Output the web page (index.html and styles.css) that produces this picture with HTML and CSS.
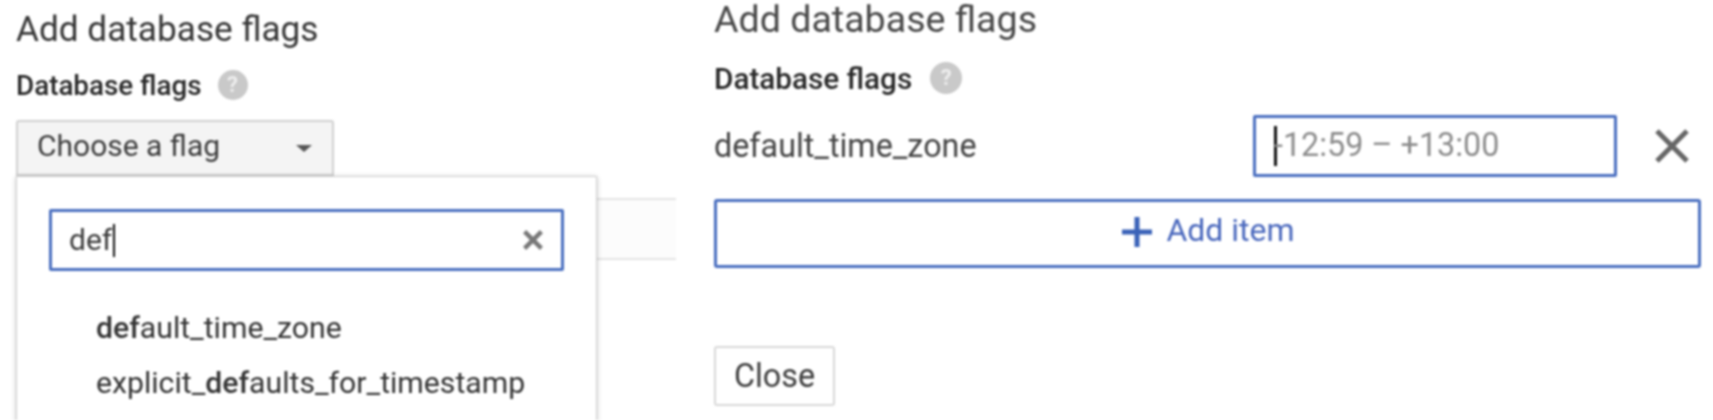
FILE: index.html
```html
<!DOCTYPE html>
<html lang="en">
<head>
<meta charset="utf-8">
<title>Add database flags</title>
<link rel="stylesheet" href="styles.css">
</head>
<body>
<div class="page">
  <section class="panel panel-left">
    <h2 class="title">Add database flags</h2>
    <div class="label-row">
      <span class="label">Database flags</span>
      <span class="help">?</span>
    </div>
    <div class="select-wrap">
      <button class="select">Choose a flag<span class="arrow"></span></button>
      <div class="backdrop-row"></div>
      <div class="menu">
        <div class="search">
          <span class="search-text">def</span><span class="caret"></span>
          <svg class="search-clear" viewBox="0 0 20 20" width="24" height="24"><path d="M3 3 17 17M17 3 3 17" fill="none" stroke="#777" stroke-width="3.6"/></svg>
        </div>
        <ul class="options">
          <li><b>def</b>ault_time_zone</li>
          <li>explicit_<b>def</b>aults_for_timestamp</li>
        </ul>
      </div>
    </div>
  </section>
  <section class="panel panel-right">
    <h2 class="title">Add database flags</h2>
    <div class="label-row">
      <span class="label">Database flags</span>
      <span class="help">?</span>
    </div>
    <div class="flag-row">
      <span class="flag-name">default_time_zone</span>
      <div class="value-input"><span class="caret caret-tall"></span><span class="placeholder">-12:59 – +13:00</span></div>
      <svg class="remove" viewBox="0 0 34 34" width="34" height="34"><path d="M2 2 32 32M32 2 2 32" fill="none" stroke="#666" stroke-width="5"/></svg>
    </div>
    <button class="add-item">
      <svg viewBox="0 0 34 34" width="34" height="34"><path d="M17 2V32M2 17H32" fill="none" stroke="#3a62b8" stroke-width="5"/></svg>
      <span class="add-label">Add item</span>
    </button>
    <button class="close">Close</button>
  </section>
</div>
</body>
</html>
```
FILE: styles.css
```css
* { box-sizing: border-box; }
html, body { margin: 0; height: 420px; overflow: hidden; background: #fff; }
body { font-family: Roboto, "Liberation Sans", sans-serif; color: #3a3a3a; }
.page { display: flex; width: 1713px; height: 420px; overflow: hidden; filter: blur(0.8px); }
.panel { flex: none; }
.panel-left { width: 714px; padding: 10px 0 0 16px; }
.panel-right { width: 987px; padding-top: 0; }
.title { margin: 0; font-size: 35.2px; line-height: 38px; font-weight: 400; color: #363636; }
.panel-right .title { font-size: 37.6px; color: #484848; }
.label-row { display: flex; align-items: center; height: 32px; margin-top: 21px; }
.panel-right .label-row { margin-top: 24px; }
.label { font-size: 27.8px; font-weight: 500; color: #282828; }
.panel-right .label { font-size: 29.7px; }
.help { width: 30px; height: 30px; margin-left: 16px; border-radius: 50%; background: #c9c9c9; color: #eee; font-size: 22px; font-weight: 700; text-align: center; line-height: 30px; }
.panel-right .help { width: 32px; height: 32px; margin-left: 18px; line-height: 32px; }
.select-wrap { position: relative; margin-top: 19px; }
.select { display: flex; align-items: center; justify-content: space-between; width: 318px; height: 56px; padding: 0 20px 6px 19px; border: 2px solid #d0d0d0; border-radius: 3px 3px 0 0; background: #f4f4f4; font: 400 30px Roboto, sans-serif; color: #3c3c3c; }
.arrow { width: 0; height: 0; margin-top: 6px; border-left: 8px solid transparent; border-right: 8px solid transparent; border-top: 7px solid #555; }
.backdrop-row { width: 660px; height: 62px; margin: 22px 0 0 0; border-top: 2px solid #e4e4e4; border-bottom: 2px solid #e4e4e4; background: #fcfcfc; }
.menu { position: absolute; left: 0; top: 56px; width: 581px; height: 300px; padding: 32px 32px 0; background: #fff; border: 1px solid #d0d0d0; box-shadow: 0 1px 5px rgba(0,0,0,.22); }
.search { display: flex; align-items: center; height: 62px; padding: 0 16px 0 18px; border: 3px solid #4a6fc0; border-radius: 2px; font-size: 30px; color: #3c3c3c; }
.search-text { line-height: 1; margin-left: -1px; }
.caret { display: inline-block; width: 2px; height: 33px; margin-left: 1px; background: #111; }
.search-clear { margin-left: auto; }
.options { list-style: none; margin: 30px 0 0; padding: 0 0 0 47px; font-size: 30.2px; color: #333; }
.options li { height: 55px; line-height: 53px; }
.options b { font-weight: 500; }
.flag-row { display: flex; align-items: center; height: 62px; margin-top: 21px; }
.flag-name { flex: 1; font-size: 32.3px; color: #444; }
.value-input { display: flex; align-items: center; width: 364px; height: 62px; padding-left: 18px; border: 3px solid #4a6fc0; border-radius: 2px; font-size: 32.3px; }
.placeholder { color: #8c8c8c; margin-left: -3px; padding-bottom: 2px; }
.caret-tall { width: 3px; height: 40px; margin: 0; }
.remove { margin: 0 12px 0 38px; }
.add-item { display: flex; align-items: center; justify-content: center; gap: 12px; width: 987px; height: 69px; margin-top: 22px; padding: 0 0 4px; border: 3px solid #4a6fc0; border-radius: 3px; background: #fff; color: #4a68bd; font: 400 32px Roboto, sans-serif; }
.add-label { margin-bottom: 4px; }
.close { display: block; width: 121px; height: 60px; margin-top: 78px; border: 2px solid #d8d8d8; border-radius: 3px; background: #fff; color: #3c3c3c; font: 400 32.3px Roboto, sans-serif; padding: 0; }
```
